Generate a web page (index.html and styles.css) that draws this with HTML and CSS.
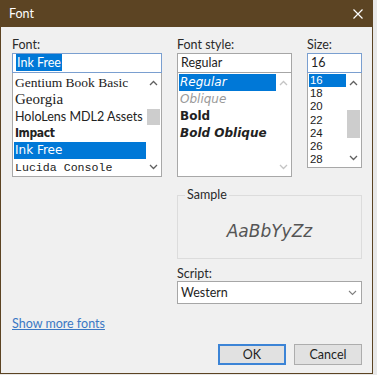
FILE: index.html
```html
<!DOCTYPE html>
<html>
<head>
    <meta charset="utf-8"/>
    <title>Font</title>
    <link rel="stylesheet" href="styles.css">
</head>

<body>
<div class="window">
    <div class="titlebar">
        <span class="title">Font</span>
        <svg class="close" width="10" height="10" viewBox="0 0 10 10">
            <path d="M0.5 0.5 L9.5 9.5 M9.5 0.5 L0.5 9.5" stroke="#fff" stroke-width="1.2"/>
        </svg>
    </div>

    <div class="content">
        <div class="pickers">
            <div class="col col-font">
                <label class="lbl">Font:</label>
                <div class="field focus"><span class="sel-text">Ink Free</span></div>
                <div class="list">
                    <ul class="items">
                        <li class="f-gentium">Gentium Book Basic</li>
                        <li class="f-georgia">Georgia</li>
                        <li class="f-holo">HoloLens MDL2 Assets</li>
                        <li class="f-impact">Impact</li>
                        <li class="f-ink active">Ink Free</li>
                        <li class="f-lucida">Lucida Console</li>
                    </ul>
                    <div class="scroll">
                        <svg class="arrow" width="9" height="6" viewBox="0 0 9 6"><path d="M1 5 L4.5 1.5 L8 5" fill="none" stroke="#606060" stroke-width="1.3"/></svg>
                        <div class="track"><div class="thumb thumb-font"></div></div>
                        <svg class="arrow" width="9" height="6" viewBox="0 0 9 6"><path d="M1 1 L4.5 4.5 L8 1" fill="none" stroke="#606060" stroke-width="1.3"/></svg>
                    </div>
                </div>
            </div>

            <div class="col col-style">
                <label class="lbl">Font style:</label>
                <div class="field">Regular</div>
                <div class="list">
                    <ul class="items">
                        <li class="s-hand active">Regular</li>
                        <li class="s-hand s-oblique">Oblique</li>
                        <li class="s-hand s-bold">Bold</li>
                        <li class="s-hand s-boldob">Bold Oblique</li>
                    </ul>
                    <div class="scroll">
                        <svg class="arrow" width="9" height="6" viewBox="0 0 9 6"><path d="M1 5 L4.5 1.5 L8 5" fill="none" stroke="#c4c4c4" stroke-width="1.3"/></svg>
                        <div class="track"></div>
                        <svg class="arrow" width="9" height="6" viewBox="0 0 9 6"><path d="M1 1 L4.5 4.5 L8 1" fill="none" stroke="#c4c4c4" stroke-width="1.3"/></svg>
                    </div>
                </div>
            </div>

            <div class="col col-size">
                <label class="lbl">Size:</label>
                <div class="field focus">16</div>
                <div class="list list-size">
                    <ul class="items">
                        <li class="active">16</li>
                        <li>18</li>
                        <li>20</li>
                        <li>22</li>
                        <li>24</li>
                        <li>26</li>
                        <li>28</li>
                    </ul>
                    <div class="scroll">
                        <svg class="arrow" width="9" height="6" viewBox="0 0 9 6"><path d="M1 5 L4.5 1.5 L8 5" fill="none" stroke="#606060" stroke-width="1.3"/></svg>
                        <div class="track"><div class="thumb thumb-size"></div></div>
                        <svg class="arrow" width="9" height="6" viewBox="0 0 9 6"><path d="M1 1 L4.5 4.5 L8 1" fill="none" stroke="#606060" stroke-width="1.3"/></svg>
                    </div>
                </div>
            </div>
        </div>

        <div class="side">
            <fieldset class="sample">
                <legend>Sample</legend>
                <div class="sample-text">AaBbYyZz</div>
            </fieldset>
            <label class="lbl lbl-script">Script:</label>
            <div class="select">
                <span>Western</span>
                <svg width="9" height="6" viewBox="0 0 9 6"><path d="M1 1 L4.5 4.5 L8 1" fill="none" stroke="#808080" stroke-width="1.1"/></svg>
            </div>
        </div>

        <a class="more" href="#">Show more fonts</a>

        <div class="buttons">
            <button class="btn btn-ok">OK</button>
            <button class="btn">Cancel</button>
        </div>
    </div>
</div>
</body>
</html>
```

FILE: styles.css
```css
* {
    margin: 0;
    padding: 0;
    box-sizing: border-box;
}
body {
    background: #e8e8e8;
    font-family: Lato, "Noto Sans", sans-serif;
    font-size: 12.5px;
    color: #1e1e1e;
}
.window {
    width: 373px;
    height: 374px;
    background: #f0f0f0;
    border: 1px solid #5c4423;
    border-top: none;
}
.titlebar {
    height: 27px;
    background: #5c4423;
    display: flex;
    align-items: center;
    justify-content: space-between;
    padding: 0 9px 0 8px;
    color: #fff;
}
.title {
    font-size: 12.5px;
}
.content {
    padding: 10px 0 0 11px;
}
.pickers {
    display: flex;
    gap: 15px;
}
.lbl {
    display: block;
    height: 16px;
    line-height: 16px;
    color: #2a2a2a;
}
.col-font {
    width: 150px;
}
.col-style {
    width: 115px;
}
.col-size {
    width: 55px;
}
.field {
    height: 20px;
    border: 1px solid #a6a6a6;
    background: #fff;
    padding: 0 3px;
    line-height: 18px;
}
.field.focus {
    border-color: #7a9fd0;
}
.sel-text {
    background: #0078d7;
    color: #fff;
    padding: 1px 1px;
}
.list {
    display: flex;
    height: 104px;
    border: 1px solid #a8a8a8;
    border-top: none;
    background: #fff;
}
.list-size {
    height: 95px;
}
.items {
    flex: 1;
    list-style: none;
    padding: 1px 0 0 1px;
    overflow: hidden;
}
.items li {
    height: 17px;
    line-height: 17px;
    padding-left: 1px;
    white-space: nowrap;
    color: #222;
}
.items li.active {
    background: #0078d7;
    color: #fff;
}
.list-size .items li {
    height: 13.2px;
    line-height: 13.2px;
    font-family: "Liberation Sans", sans-serif;
    font-size: 11.4px;
}
.scroll {
    width: 15px;
    display: flex;
    flex-direction: column;
    align-items: center;
    padding: 7px 0 6px;
}
.track {
    flex: 1;
    width: 100%;
    position: relative;
}
.thumb {
    position: absolute;
    left: 1px;
    right: 1px;
    background: #cdcdcd;
}
.thumb-font {
    top: 23px;
    height: 16px;
}
.thumb-size {
    top: 24px;
    height: 28px;
}
.f-gentium {
    font-family: "Liberation Serif", serif;
    font-size: 13.5px;
}
.f-georgia {
    font-family: "Liberation Serif", serif;
    font-size: 15px;
}
.f-holo {
    font-size: 12.5px;
}
.f-impact {
    font-family: "DejaVu Sans Condensed", "DejaVu Sans", sans-serif;
    font-weight: bold;
    font-size: 12px;
    letter-spacing: -0.4px;
}
.items li.f-ink,
.s-hand {
    font-family: "DejaVu Sans", sans-serif;
    font-size: 12px;
}
.f-lucida {
    font-family: "Liberation Mono", monospace;
    font-size: 11.6px;
}
.s-hand {
    font-style: italic;
}
.items li.s-oblique {
    color: #9a9a9a;
    font-weight: 300;
}
.s-bold {
    font-weight: bold;
    font-style: normal;
}
.s-boldob {
    font-weight: bold;
}
.side {
    margin-left: 165px;
    width: 185px;
    margin-top: 10px;
}
.sample {
    border: 1px solid #dcdcdc;
    height: 72px;
    padding: 0;
}
.sample legend {
    margin-left: 7px;
    padding: 0 2px;
    color: #2a2a2a;
    line-height: 16px;
}
.sample-text {
    text-align: center;
    font-family: "DejaVu Sans", sans-serif;
    font-style: italic;
    font-size: 17px;
    color: #555;
    padding-top: 18px;
}
.lbl-script {
    margin-top: 7px;
    height: 15px;
}
.select {
    height: 23px;
    border: 1px solid #a6a6a6;
    background: #fff;
    display: flex;
    align-items: center;
    justify-content: space-between;
    padding: 0 4px 0 3px;
}
.more {
    display: inline-block;
    margin-top: 12px;
    color: #3b78c4;
    line-height: 16px;
}
.buttons {
    display: flex;
    justify-content: flex-end;
    gap: 8px;
    margin-top: 12px;
    padding-right: 10px;
}
.btn {
    width: 68px;
    height: 21px;
    background: #e1e1e1;
    border: 1px solid #adadad;
    font-family: inherit;
    font-size: 12.5px;
    color: #1e1e1e;
}
.btn-ok {
    border: 2px solid #3c84d6;
}
```
